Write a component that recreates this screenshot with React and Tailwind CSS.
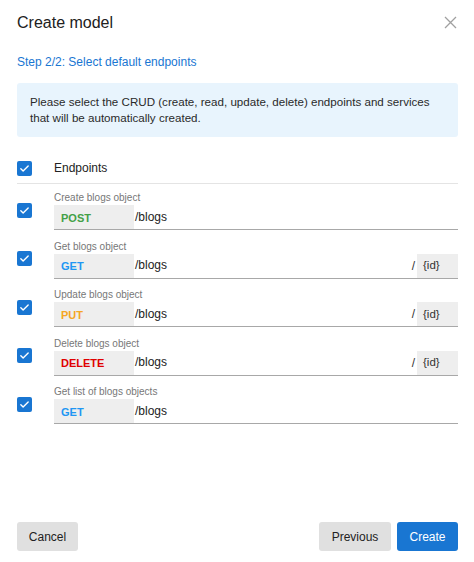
import React from "react";

function Check() {
  return (
    <div className="w-[15px] h-[15px] rounded-[2px] bg-[#1976d2] flex items-center justify-center shrink-0">
      <svg width="11" height="11" viewBox="0 0 24 24" fill="none">
        <path d="M4 12.5l5 5L20 6.5" stroke="white" strokeWidth="3" strokeLinecap="round" strokeLinejoin="round" />
      </svg>
    </div>
  );
}

const rows = [
  { label: "Create blogs object", method: "POST", color: "text-[#43a047]", id: false },
  { label: "Get blogs object", method: "GET", color: "text-[#2196f3]", id: true },
  { label: "Update blogs object", method: "PUT", color: "text-[#f5a623]", id: true },
  { label: "Delete blogs object", method: "DELETE", color: "text-[#e00000]", id: true },
  { label: "Get list of blogs objects", method: "GET", color: "text-[#2196f3]", id: false },
];

export default function App() {
  return (
    <div
      className="w-[474px] h-[562px] bg-white flex flex-col text-[#212121]"
      style={{ fontFamily: '"Liberation Sans", Arial, sans-serif' }}
    >
      <div className="flex items-center justify-between pl-[17px] pr-[16px] pt-[11px] h-[34px]">
        <div className="text-[16px] leading-[22px]">Create model</div>
        <svg width="13" height="13" viewBox="0 0 13 13" className="mr-[1px]">
          <path d="M1 1L12 12M12 1L1 12" stroke="#a0a0a0" strokeWidth="1.3" />
        </svg>
      </div>
      <div className="pl-[17px] pr-[16px] mt-[20px] text-[12px] leading-[16px] text-[#1976d2]">
        Step 2/2: Select default endpoints
      </div>
      <div className="mx-[17px] mr-[16px] mt-[13px] h-[54px] rounded-[3px] bg-[#e8f4fd] px-[13px] py-[11px] text-[11.6px] leading-[16px] text-[#2a2a2a]">
        Please select the CRUD (create, read, update, delete) endpoints and services that will be automatically created.
      </div>
      <div className="mx-[17px] mr-[16px] mt-[16px] flex items-center h-[31px] border-b border-[#e4e4e4]">
        <div className="w-[37px] flex">
          <Check />
        </div>
        <div className="text-[12px] font-medium text-[#222]">Endpoints</div>
      </div>
      <div className="mx-[17px] mr-[16px] mt-[2px] flex flex-col">
        {rows.map((r, i) => (
          <div key={i} className="flex items-center h-[48.5px]">
            <div className="w-[37px] flex">
              <Check />
            </div>
            <div className="flex-1 flex flex-col">
              <div className="text-[10px] leading-[15px] text-[#777]">{r.label}</div>
              <div className="flex items-stretch h-[25px] border-b border-[#a8a8a8]">
                <div className={`w-[80px] bg-[#eeeeee] flex items-center pl-[7px] pt-[1px] text-[11px] font-bold ${r.color}`}>
                  {r.method}
                </div>
                <div className="flex-1 flex items-center pl-[1px] pb-[1px] text-[12px] text-[#222]">/blogs</div>
                {r.id && (
                  <div className="flex items-stretch">
                    <div className="flex items-center pr-[2px] text-[12px] text-[#333]">/</div>
                    <div className="w-[41px] bg-[#eeeeee] flex items-center pl-[6px] text-[11.5px] text-[#333]">{"{id}"}</div>
                  </div>
                )}
              </div>
            </div>
          </div>
        ))}
      </div>
      <div className="flex-1" />
      <div className="flex items-center justify-between pl-[17px] pr-[16px] pb-[11px]">
        <button className="h-[29px] w-[61px] rounded-[3px] bg-[#e0e0e0] text-[12px] font-medium text-[#222]">Cancel</button>
        <div className="flex gap-[6px]">
          <button className="h-[29px] w-[72px] rounded-[3px] bg-[#e0e0e0] text-[12px] font-medium text-[#222]">Previous</button>
          <button className="h-[29px] w-[61px] rounded-[3px] bg-[#1976d2] text-[12px] font-medium text-white">Create</button>
        </div>
      </div>
    </div>
  );
}
